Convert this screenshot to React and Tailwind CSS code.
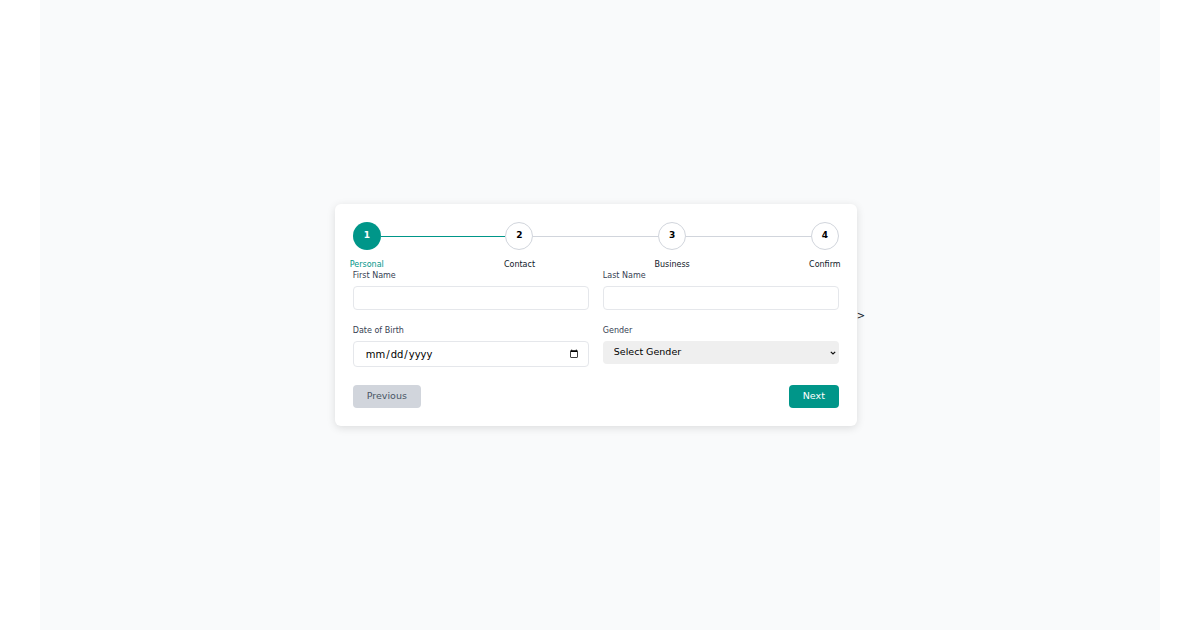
import { useState } from "react";

const steps = ["Personal", "Contact", "Business", "Confirm"];

function Stepper({ current }) {
    return (
        <div className="flex items-center">
            {steps.map((label, i) => (
                <div key={label} className={i < steps.length - 1 ? "flex items-center flex-1" : "flex items-center"}>
                    <div className="relative">
                        <div
                            className={
                                i === current
                                    ? "w-7 h-7 rounded-full bg-teal-600 text-white flex items-center justify-center text-[9px] font-bold"
                                    : "w-7 h-7 rounded-full bg-white border border-gray-300 text-black flex items-center justify-center text-[9px] font-bold"
                            }
                        >
                            {i + 1}
                        </div>
                        <div
                            className={
                                i === current
                                    ? "absolute top-full mt-[9px] left-1/2 -translate-x-1/2 whitespace-nowrap text-[8px] leading-[12px] text-teal-600"
                                    : "absolute top-full mt-[9px] left-1/2 -translate-x-1/2 whitespace-nowrap text-[8px] leading-[12px] text-gray-900"
                            }
                        >
                            {label}
                        </div>
                    </div>
                    {i < steps.length - 1 && (
                        <div className={i === current ? "flex-1 h-px bg-teal-600" : "flex-1 h-px bg-gray-300"} />
                    )}
                </div>
            ))}
        </div>
    );
}

export default function App() {
    const [form, setForm] = useState({ firstName: "", lastName: "", dob: "", gender: "" });
    const update = (key) => (e) => setForm({ ...form, [key]: e.target.value });

    return (
        <div className="w-full h-[630px] bg-white px-10" style={{ fontFamily: '"DejaVu Sans", sans-serif' }}>
            <div className="h-full bg-gray-50 flex items-center justify-center">
                <div className="w-[522px] bg-white rounded-md shadow-[0_2px_8px_rgba(0,0,0,0.12)] px-[18px] pt-[18px] pb-[18px]">
                    <Stepper current={0} />

                    <div className="grid grid-cols-2 items-start gap-x-[14px] gap-y-[15px] mt-[20px]">
                        <div>
                            <label className="block text-[8px] leading-[12px] text-gray-700 mb-1">First Name</label>
                            <input
                                value={form.firstName}
                                onChange={update("firstName")}
                                className="block w-full h-6 border border-gray-200 rounded-[4px] px-[11px] text-[10px] outline-none"
                            />
                        </div>
                        <div>
                            <label className="block text-[8px] leading-[12px] text-gray-700 mb-1">Last Name</label>
                            <input
                                value={form.lastName}
                                onChange={update("lastName")}
                                className="block w-full h-6 border border-gray-200 rounded-[4px] px-[11px] text-[10px] outline-none"
                            />
                        </div>
                        <div>
                            <label className="block text-[8px] leading-[12px] text-gray-700 mb-1">Date of Birth</label>
                            <input
                                type="date"
                                value={form.dob}
                                onChange={update("dob")}
                                className="block w-full h-[26px] border border-gray-200 rounded-[4px] pl-[11px] pr-[7px] text-[10px] text-black outline-none"
                            />
                        </div>
                        <div>
                            <label className="block text-[8px] leading-[12px] text-gray-700 mb-1">Gender</label>
                            <div className="relative">
                                <select
                                    value={form.gender}
                                    onChange={update("gender")}
                                    className="block w-full h-[23px] appearance-none bg-[#efefef] rounded-[4px] px-[11px] text-[9.5px] text-black outline-none"
                                >
                                    <option value="">Select Gender</option>
                                    <option value="male">Male</option>
                                    <option value="female">Female</option>
                                    <option value="other">Other</option>
                                </select>
                                <svg
                                    className="absolute right-[3px] top-1/2 -translate-y-1/2 pointer-events-none"
                                    width="6"
                                    height="4"
                                    viewBox="0 0 6 4"
                                    fill="none"
                                >
                                    <path d="M0.8 0.8 L3 3 L5.2 0.8" stroke="#111" strokeWidth="1.2" />
                                </svg>
                            </div>
                        </div>
                    </div>

                    <div className="flex justify-between mt-[18px]">
                        <button className="w-[68px] h-[23px] bg-gray-300 text-gray-600 rounded-[4px] text-[9.5px]">
                            Previous
                        </button>
                        <button className="w-[50px] h-[23px] bg-teal-600 text-white rounded-[4px] text-[9.5px]">
                            Next
                        </button>
                    </div>
                </div>
                <span className="text-[10px] text-gray-900">&gt;</span>
            </div>
        </div>
    );
}
